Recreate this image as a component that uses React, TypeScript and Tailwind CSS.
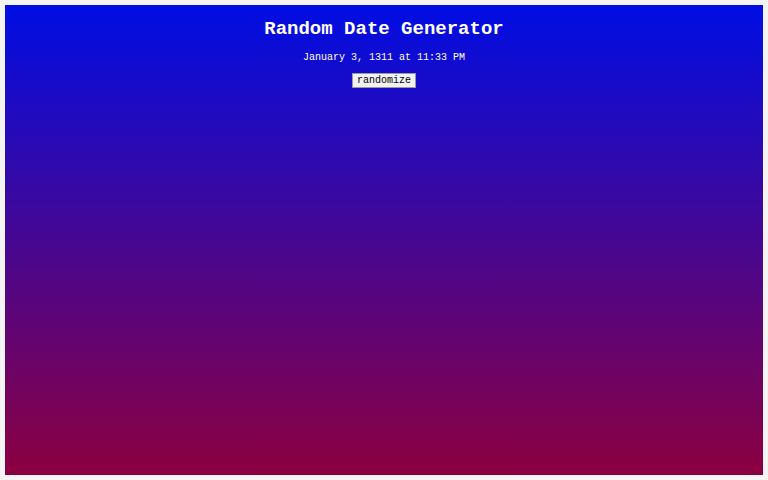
export default function App() {
  return (
    <div className="h-[480px] w-[768px] bg-[#f4f4f4] p-[5px] font-['Liberation_Mono',monospace]">
      <div className="flex h-[470px] w-[758px] flex-col items-center bg-[linear-gradient(to_bottom,#000ee4,#8c0040)] text-white">
        <h1 className="mt-[12px] text-[19px] leading-[24px] font-bold">Random Date Generator</h1>
        <p className="mt-[10px] text-[10px] leading-[13px]">January 3, 1311 at 11:33 PM</p>
        <button className="mt-[9px] h-[15px] border border-[#9a9a9a] bg-[#f2f2f2] px-[4px] text-[10px] leading-[12px] text-black">
          randomize
        </button>
      </div>
    </div>
  );
}
